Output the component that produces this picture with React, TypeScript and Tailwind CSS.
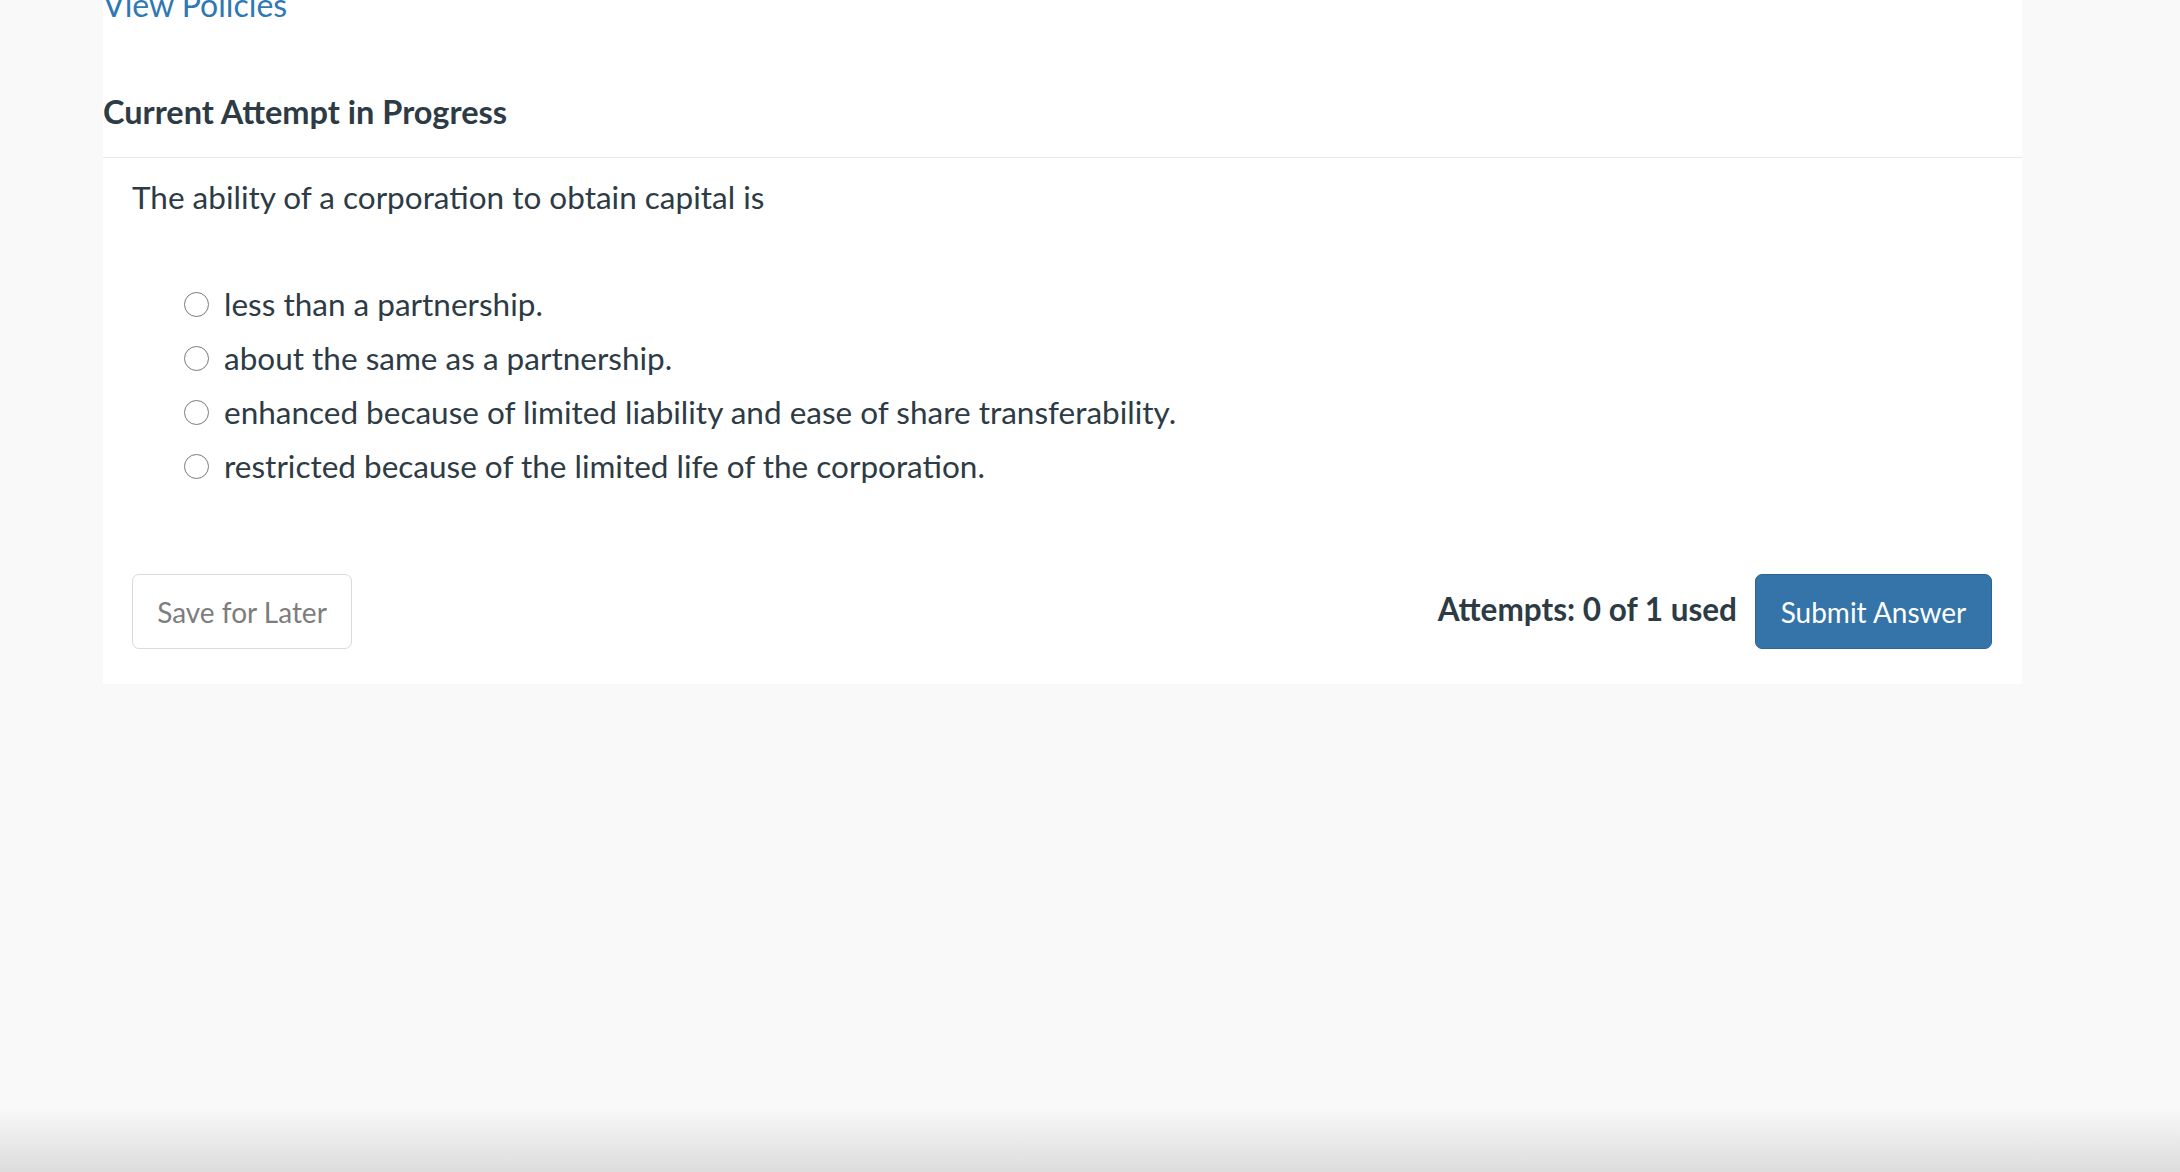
import React from "react";

const options = [
  "less than a partnership.",
  "about the same as a partnership.",
  "enhanced because of limited liability and ease of share transferability.",
  "restricted because of the limited life of the corporation.",
];

export default function App() {
  return (
    <div className="flex h-[1172px] flex-col overflow-hidden bg-[#f9f9f9] font-['Lato','Noto_Sans',sans-serif] text-[#2d3b45]">
      <div className="ml-[103px] w-[1919px] bg-white">
        <div className="-mt-[15px] text-[32px] leading-[40px] text-[#2f78b3]">
          View Policies
        </div>
        <div className="mt-[67px] border-b-[1.5px] border-[#e8e8e8] pb-[25px]">
          <h2 className="text-[32.5px] font-bold leading-[40px]">Current Attempt in Progress</h2>
        </div>
        <div className="pl-[29px] pr-[30px] pt-[19px] pb-[35px]">
          <p className="text-[31.5px] leading-[40px]">The ability of a corporation to obtain capital is</p>
          <div className="mt-[60px] flex flex-col pl-[52px]">
            {options.map((o) => (
              <label key={o} className="flex h-[54px] items-center gap-[15px]">
                <span className="h-[25px] w-[25px] shrink-0 rounded-full border-[1.5px] border-[#7a7a7a] bg-white" />
                <span className="text-[31.5px] leading-[40px]">{o}</span>
              </label>
            ))}
          </div>
          <div className="mt-[81px] flex items-center justify-between">
            <button className="flex h-[75px] w-[220px] items-center justify-center rounded-[7px] border-[1.5px] border-[#dadada] bg-white text-[28px] text-[#7d7d7d]">
              Save for Later
            </button>
            <div className="flex items-center gap-[18px]">
              <span className="mb-[4px] text-[31.5px] font-bold">Attempts: 0 of 1 used</span>
              <button className="flex h-[75px] w-[237px] items-center justify-center rounded-[7px] border-[1.5px] border-[#2c6592] bg-[#3574a8] text-[28px] text-white">
                Submit Answer
              </button>
            </div>
          </div>
        </div>
      </div>
      <div className="mt-auto h-[65px] bg-gradient-to-b from-[#f9f9f9] to-[#dcdcdc]" />
    </div>
  );
}
